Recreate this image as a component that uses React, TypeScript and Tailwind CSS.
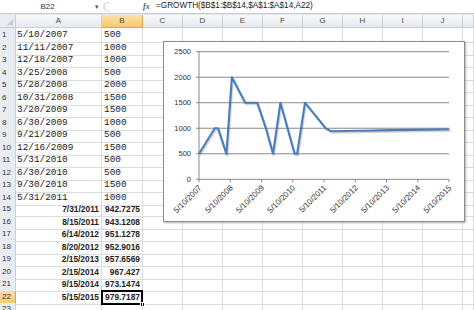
import React from 'react';

const rows: [string, string][] = [
  ['5/10/2007', '500'],
  ['11/11/2007', '1000'],
  ['12/18/2007', '1000'],
  ['3/25/2008', '500'],
  ['5/28/2008', '2000'],
  ['10/31/2008', '1500'],
  ['3/20/2009', '1500'],
  ['6/30/2009', '1000'],
  ['9/21/2009', '500'],
  ['12/16/2009', '1500'],
  ['5/31/2010', '500'],
  ['6/30/2010', '500'],
  ['9/30/2010', '1500'],
  ['5/31/2011', '1000'],
  ['7/31/2011', '942.7275'],
  ['8/15/2011', '943.1208'],
  ['6/14/2012', '951.1278'],
  ['8/20/2012', '952.9016'],
  ['2/15/2013', '957.6569'],
  ['2/15/2014', '967.427'],
  ['9/15/2014', '973.1474'],
  ['5/15/2015', '979.7187'],
];

const cols = ['A', 'B', 'C', 'D', 'E', 'F', 'G', 'H', 'I', 'J', ''];
const gridCols = 'grid grid-cols-[16px_86px_41px_40px_40px_40px_40px_40px_40px_40px_40px_1fr]';

const toTime = (s: string) => {
  const [m, d, y] = s.split('/').map(Number);
  return Date.UTC(y, m - 1, d);
};

// plot area inside the chart box
const X0 = 35;
const X1 = 285;
const Y0 = 137.3;
const YTOP = 9.7;
const T0 = toTime('5/10/2007');
const T1 = toTime('5/10/2015');

const px = (t: number) => X0 + ((t - T0) / (T1 - T0)) * (X1 - X0);
const py = (v: number) => Y0 - (v / 2500) * (Y0 - YTOP);

const Chart: React.FC = () => {
  const pts = rows.map(([d, v]) => `${px(toTime(d)).toFixed(1)},${py(parseFloat(v)).toFixed(1)}`).join(' ');
  const years = [2007, 2008, 2009, 2010, 2011, 2012, 2013, 2014, 2015];
  return (
    <div className="absolute left-[163px] top-[41px] w-[302px] h-[181px] bg-white border border-[#8c8c8c] shadow-[1px_1px_2px_rgba(0,0,0,0.3)]">
      <svg width="300" height="179" className="block">
        {[0, 500, 1000, 1500, 2000, 2500].map((v) => (
          <g key={v}>
            <line x1={X0 - 3} x2={X1} y1={py(v)} y2={py(v)} stroke="#8a8a8a" strokeWidth="1" />
            <text x={27} y={py(v) + 2.6} textAnchor="end" fontSize="7.5" fill="#333" fontFamily="Liberation Sans, sans-serif">
              {v}
            </text>
          </g>
        ))}
        <line x1={X0} x2={X0} y1={YTOP} y2={Y0} stroke="#8a8a8a" strokeWidth="1" />
        {years.map((y) => {
          const tx = px(toTime(`5/10/${y}`));
          return (
            <g key={y}>
              <line x1={tx} x2={tx} y1={Y0} y2={Y0 + 3} stroke="#8a8a8a" strokeWidth="1" />
              <text
                x={tx + 3}
                y={Y0 + 9}
                textAnchor="end"
                fontSize="8"
                fill="#333"
                fontFamily="Liberation Sans, sans-serif"
                transform={`rotate(-45 ${tx + 3} ${Y0 + 9})`}
              >
                {`5/10/${y}`}
              </text>
            </g>
          );
        })}
        <polyline points={pts} fill="none" stroke="rgba(0,0,0,0.16)" strokeWidth="2.2" strokeLinejoin="round" transform="translate(1 1.5)" />
        <polyline points={pts} fill="none" stroke="#4a7ebb" strokeWidth="2.1" strokeLinejoin="round" />
      </svg>
    </div>
  );
};

const App: React.FC = () => {
  return (
    <div className="relative w-[474px] h-[310px] overflow-hidden bg-white font-['Liberation_Sans',sans-serif] text-[#222]">
      {/* formula bar */}
      <div className="flex items-center h-[14px] border-b border-[#c6c9ce] bg-white">
        <div className="w-[95px] text-center text-[8px] text-[#333]">B22</div>
        <div className="w-[8px] text-[7px] leading-none text-[#555]">▾</div>
        <div className="w-[40px] flex items-center">
          <div className="w-[7px] h-[10px] rounded-l-full border-l-2 border-y border-[#d6dbe1]" />
        </div>
        <div className="w-[13px] text-[8px] italic font-bold font-['Liberation_Serif',serif] text-[#555]">fx</div>
        <div className="text-[8.2px] text-[#222] whitespace-nowrap">=GROWTH($B$1:$B$14,$A$1:$A$14,A22)</div>
      </div>
      <div className="h-[1px] bg-[#e6e9ee]" />

      {/* column headers */}
      <div className={`${gridCols} h-[13px] text-[8px] text-[#4a4a4a]`}>
        <div className="relative bg-[#e9edf2] border-r border-b border-[#c4cbd5]">
          <div className="absolute right-[2px] bottom-[2px] w-0 h-0 border-l-[6px] border-l-transparent border-b-[6px] border-b-[#c4cbd5]" />
        </div>
        {cols.map((c, i) => (
          <div
            key={i}
            className={
              i === 1
                ? 'flex items-center justify-center bg-gradient-to-b from-[#fbe2a8] to-[#f5c970] border-r border-b border-[#d9a94e]'
                : 'flex items-center justify-center bg-gradient-to-b from-[#f7f8fa] to-[#e6eaef] border-r border-b border-[#c9cfd7]'
            }
          >
            {c}
          </div>
        ))}
      </div>

      {/* rows */}
      {Array.from({ length: 23 }, (_, r) => {
        const n = r + 1;
        const data = rows[r];
        const bold = n >= 15;
        const sel = n === 22;
        return (
          <div key={n} className={`${gridCols} ${n % 2 === 1 ? 'h-[13px]' : 'h-[12px]'}`}>
            <div
              className={
                sel
                  ? 'flex items-center pl-[2px] text-[8px] text-[#333] bg-gradient-to-b from-[#fbe0a2] to-[#f4c96f] border-r border-b border-[#d9a94e]'
                  : 'flex items-center pl-[2px] text-[8px] text-[#333] bg-[#e9edf2] border-r border-b border-[#c9cfd7]'
              }
            >
              {n}
            </div>
            <div
              className={
                bold
                  ? 'flex items-center justify-end pr-[2px] border-r border-b border-[#dadcdf] text-[8.4px] font-bold'
                  : "flex items-center pl-[1px] border-r border-b border-[#dadcdf] text-[9.4px] font-['Liberation_Mono',monospace]"
              }
            >
              {data ? data[0] : ''}
            </div>
            <div
              className={
                bold
                  ? 'relative flex items-center justify-end pr-[2px] border-r border-b border-[#dadcdf] text-[8.4px] font-bold'
                  : "relative flex items-center pl-[2px] border-r border-b border-[#dadcdf] text-[9.4px] font-['Liberation_Mono',monospace]"
              }
            >
              {data ? data[1] : ''}
              {sel && (
                <>
                  <div className="absolute -left-[1px] -top-[1px] -right-[1px] -bottom-[1px] border-2 border-black" />
                  <div className="absolute -right-[3px] -bottom-[3px] w-[5px] h-[5px] bg-black border border-white" />
                </>
              )}
            </div>
            {cols.slice(2).map((_, i) => (
              <div key={i} className="border-r border-b border-[#dadcdf]" />
            ))}
          </div>
        );
      })}

      <Chart />
    </div>
  );
};

export default App;
